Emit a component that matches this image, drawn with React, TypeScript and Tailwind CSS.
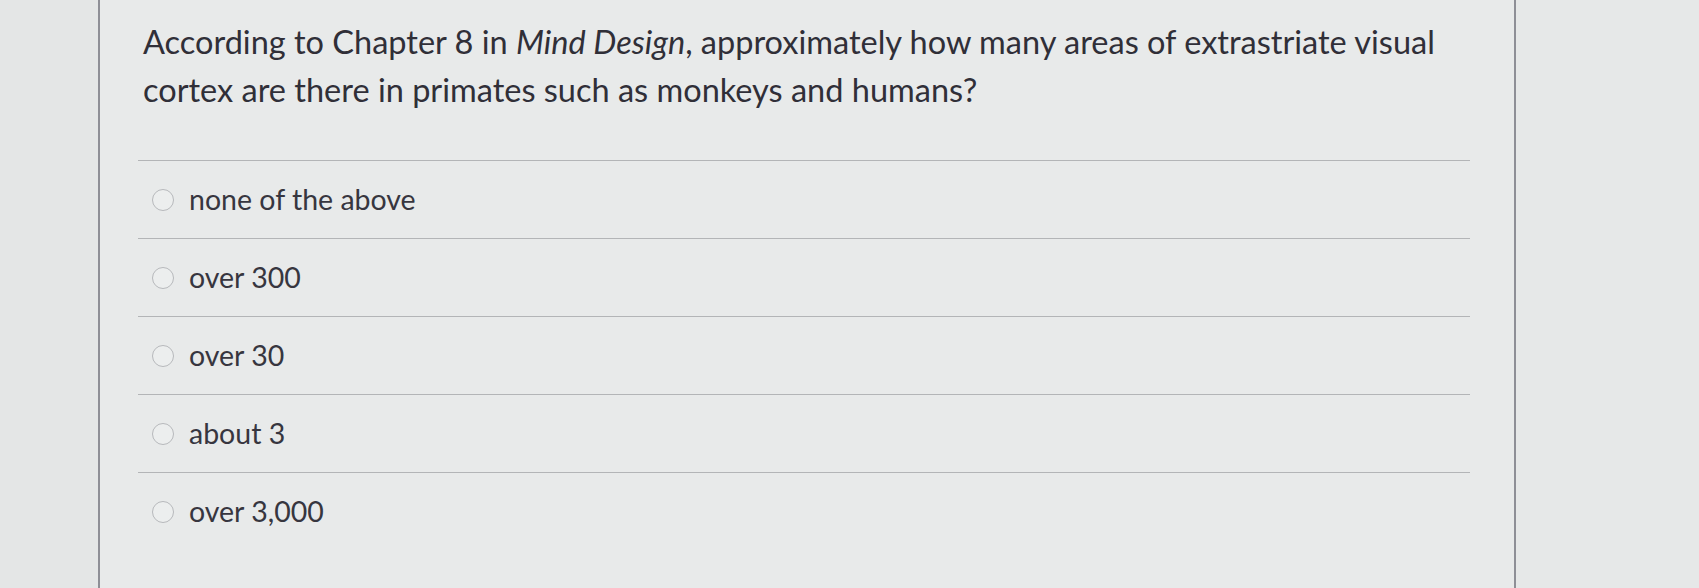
import React from "react";

const options = ["none of the above", "over 300", "over 30", "about 3", "over 3,000"];

export default function App() {
  return (
    <div
      className="w-[1699px] h-[588px] overflow-hidden flex bg-[#e4e6e6]"
      style={{ fontFamily: "Lato, 'Noto Sans', sans-serif" }}
    >
      <div className="w-[100px] shrink-0 border-r-2 border-[#8e8f96]" />
      <div className="w-[1416px] shrink-0 bg-[#e8eaea] pl-[38px] pr-[44px] border-r-2 border-[#8e8f96]">
        <div className="pt-[18px] pl-[5px] text-[32.5px] leading-[48px] text-[#302f38]">
          According to Chapter 8 in <i>Mind Design</i>, approximately how many areas of extrastriate visual
          <br />
          cortex are there in primates such as monkeys and humans?
        </div>
        <div className="mt-[46px]">
          {options.map((o) => (
            <div
              key={o}
              className="h-[78px] border-t border-[#b3b5b7] flex items-center pl-[14px] gap-[15px]"
            >
              <div className="w-[22px] h-[22px] rounded-full border-[1.5px] border-[#b7b9bc] bg-[#eceeee] shrink-0" />
              <span className="text-[28.5px] text-[#37363f]">{o}</span>
            </div>
          ))}
        </div>
      </div>
      <div className="flex-1 bg-[#e6e8e8]" />
    </div>
  );
}
